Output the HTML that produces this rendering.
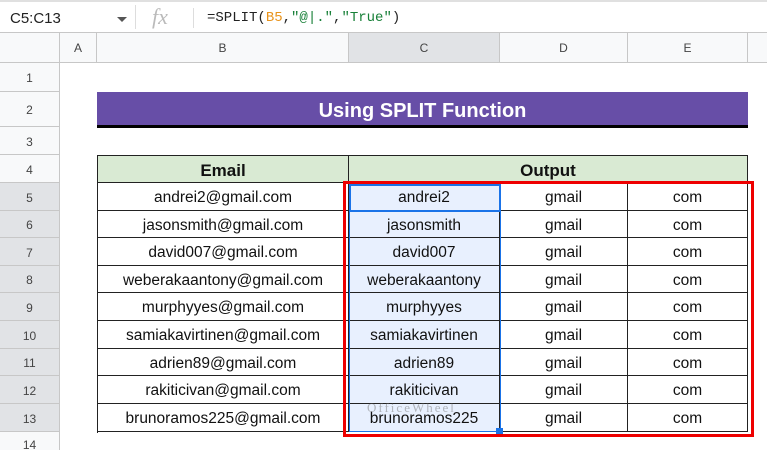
<!DOCTYPE html>
<html><head><style>
*{margin:0;padding:0;box-sizing:border-box}
html,body{width:767px;height:450px;overflow:hidden}
body{background:#fff;font-family:"Liberation Sans",Arial,sans-serif;position:relative}
.a{position:absolute}
.fb{top:0;left:0;width:767px;height:33px;border-top:2px solid #e0e0e0;border-bottom:1px solid #c7c7c7;background:#fff}
.ch{top:33px;height:30px;background:#f8f9fa;border-right:1px solid #c7c7c7;border-bottom:1px solid #c7c7c7;color:#444;font-size:12px;text-align:center;line-height:30px}
.rh{left:0;width:60px;background:#f8f9fa;border-right:1px solid #c7c7c7;border-bottom:1px solid #c7c7c7;color:#444;font-size:12px;text-align:center;padding-top:2px}
.c{border-right:1px solid #222;border-bottom:1px solid #222;text-align:center;font-size:15.5px;color:#111;padding-top:3px}
</style></head><body>
<div class="a fb"></div>
<div class="a" style="left:10px;top:10px;font-size:15px;color:#222">C5:C13</div>
<div class="a" style="left:117px;top:17px;width:0;height:0;border-left:5px solid transparent;border-right:5px solid transparent;border-top:5px solid #555"></div>
<div class="a" style="left:135px;top:5px;width:1px;height:24px;background:#ddd"></div>
<div class="a" style="left:152px;top:4px;font-family:'Liberation Serif',serif;font-style:italic;font-size:22px;color:#bbb">fx</div>
<div class="a" style="left:193px;top:8px;width:1px;height:20px;background:#ddd"></div>
<div class="a" style="left:207px;top:10px;font-family:'Liberation Mono',monospace;font-size:14px;color:#222">=SPLIT(<span style="color:#e8931b">B5</span>,<span style="color:#188038">"@|."</span>,<span style="color:#188038">"True"</span>)</div>

<div class="a ch" style="left:0;width:60px"></div>
<div class="a ch" style="left:60px;width:37px">A</div>
<div class="a ch" style="left:97px;width:252px">B</div>
<div class="a ch" style="left:349px;width:151px;background:#e1e3e6">C</div>
<div class="a ch" style="left:500px;width:128px">D</div>
<div class="a ch" style="left:628px;width:120px">E</div>
<div class="a ch" style="left:748px;width:19px;border-right:none"></div>

<div class="a rh" style="top:63px;height:29px;line-height:27px">1</div>
<div class="a rh" style="top:92px;height:35px;line-height:33px">2</div>
<div class="a rh" style="top:127px;height:28px;line-height:26px">3</div>
<div class="a rh" style="top:155px;height:28px;line-height:26px">4</div>
<div class="a rh" style="top:183px;height:28px;line-height:26px;background:#e1e3e6">5</div>
<div class="a rh" style="top:211px;height:27px;line-height:25px;background:#e1e3e6">6</div>
<div class="a rh" style="top:238px;height:28px;line-height:26px;background:#e1e3e6">7</div>
<div class="a rh" style="top:266px;height:27px;line-height:25px;background:#e1e3e6">8</div>
<div class="a rh" style="top:293px;height:28px;line-height:26px;background:#e1e3e6">9</div>
<div class="a rh" style="top:321px;height:28px;line-height:26px;background:#e1e3e6">10</div>
<div class="a rh" style="top:349px;height:27px;line-height:25px;background:#e1e3e6">11</div>
<div class="a rh" style="top:376px;height:28px;line-height:26px;background:#e1e3e6">12</div>
<div class="a rh" style="top:404px;height:28px;line-height:26px;background:#e1e3e6">13</div>
<div class="a rh" style="top:432px;height:28px;line-height:22px">14</div>

<div class="a" style="left:97px;top:92px;width:651px;height:36px;background:#674ea7;border-bottom:3px solid #000;color:#fff;font-weight:bold;font-size:20px;text-align:center;line-height:33px;padding-top:3px">Using SPLIT Function</div>

<div class="a" style="left:97px;top:155px;width:651px;height:278px;border-top:1px solid #222;border-left:1px solid #222"></div>
<div class="a c" style="left:98px;top:156px;width:251px;height:27px;background:#d9ead3;font-weight:bold;font-size:17px;line-height:24px">Email</div>
<div class="a c" style="left:349px;top:156px;width:399px;height:27px;background:#d9ead3;font-weight:bold;font-size:17px;line-height:24px">Output</div>
<div id="rows"></div>
<script>
const d=["andrei2","jasonsmith","david007","weberakaantony","murphyyes","samiakavirtinen","adrien89","rakiticivan","brunoramos225"];
const tops=[183,211,238,266,293,321,349,376,404,432];let h='';
d.forEach((n,i)=>{const t=tops[i],hh=tops[i+1]-t,lh=hh-4;
h+=`<div class="a c" style="left:98px;top:${t}px;width:251px;height:${hh}px;line-height:${lh}px">${n}@gmail.com</div>`;
h+=`<div class="a c" style="left:349px;top:${t}px;width:151px;height:${hh}px;line-height:${lh}px;background:#e8f0fe">${n}</div>`;
h+=`<div class="a c" style="left:500px;top:${t}px;width:128px;height:${hh}px;line-height:${lh}px">gmail</div>`;
h+=`<div class="a c" style="left:628px;top:${t}px;width:120px;height:${hh}px;line-height:${lh}px">com</div>`;});
document.getElementById('rows').innerHTML=h;
</script>
<div class="a" style="left:349px;top:184px;width:152px;height:248px;border:1px solid #1a73e8"></div>
<div class="a" style="left:349px;top:184px;width:152px;height:28px;border:2px solid #1a73e8"></div>
<div class="a" style="left:496px;top:428px;width:7px;height:7px;background:#1a73e8"></div>
<div class="a" style="left:343px;top:181px;width:411px;height:256px;border:3px solid #e00"></div>
<div class="a" style="left:346px;top:400px;font-size:13px;color:rgba(120,120,120,0.5);letter-spacing:2px;font-family:'Liberation Serif',serif">&nbsp;&nbsp;&nbsp;&nbsp;OfficeWheel</div>
</body></html>
